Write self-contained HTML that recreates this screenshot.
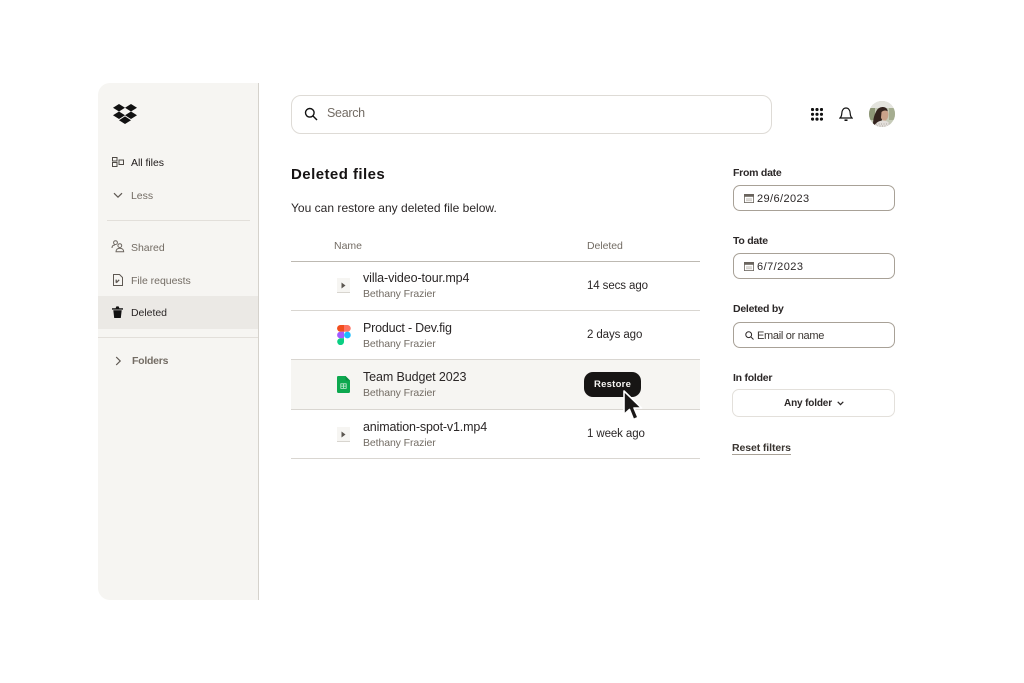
<!DOCTYPE html>
<html lang="en">
<head>
<meta charset="utf-8">
<title>Deleted files</title>
<style>
html,body{margin:0;padding:0;background:#fff}
body{width:1024px;height:683px;position:relative;overflow:hidden;font-family:"Liberation Sans",sans-serif;color:#1e1919}
.a{position:absolute}
.t{position:absolute;white-space:nowrap;line-height:20px}
svg{position:absolute;display:block}
.g{color:#736c64}
.side{font-size:10.5px;letter-spacing:-.03px}
.name{font-size:12.5px;letter-spacing:-.1px;color:#2b2727}
.by{font-size:10.5px;letter-spacing:-.1px;color:#736c64}
.when{font-size:11.5px;letter-spacing:-.1px;color:#2b2727}
.lab{font-size:10.5px;font-weight:700;letter-spacing:-.25px;color:#2b2727}
.inp{position:absolute;left:733px;width:160px;height:24px;border:1px solid #a8a197;border-radius:7px;background:#fff}
.line{position:absolute;left:291px;width:409px;height:1px;background:#d9d6d1}
</style>
</head>
<body>
<!-- Sidebar -->
<div class="a" style="left:98px;top:83px;width:160px;height:517px;background:#f6f5f2;border-radius:12px 0 0 12px"></div>
<div class="a" style="left:258px;top:83px;width:1px;height:517px;background:#d5d2cc"></div>
<div class="a" style="left:98px;top:296px;width:160px;height:33px;background:#ebe9e5"></div>
<div class="a" style="left:107px;top:220px;width:143px;height:1px;background:#e2dfda"></div>
<div class="a" style="left:98px;top:337px;width:160px;height:1px;background:#e2dfda"></div>

<svg style="left:113px;top:104px" width="24" height="20" viewBox="0 0 24 20" fill="#111">
<path d="M6 0l6 3.700L6 7.500 0 3.700zM18 0l6 3.700-6 3.800-6-3.800zM0 11.200L6 7.500l6 3.700L6 15zM18 7.500l6 3.700L18 15l-6-3.800zM6 16.200l6-3.800 6 3.800-6 3.800z"/>
</svg>

<svg style="left:112px;top:157px" width="12" height="10" viewBox="0 0 12 10" fill="none" stroke="#4f4a45" stroke-width="1">
<rect x=".5" y=".5" width="4.500" height="3.500"/><rect x=".5" y="5.500" width="4.500" height="4"/><rect x="7" y="3" width="4.500" height="4.500"/>
</svg>
<div class="t side" style="left:131px;top:153px;color:#1e1919">All files</div>

<svg style="left:113px;top:192px" width="10" height="7" viewBox="0 0 10 7" fill="none" stroke="#5e5852" stroke-width="1.200"><path d="M1 1.200l4 4 4-4"/></svg>
<div class="t side g" style="left:131px;top:186px">Less</div>

<svg style="left:111px;top:240px" width="14" height="13" viewBox="0 0 14 13" fill="none" stroke="#6b655e" stroke-width="1">
<circle cx="4.500" cy="2.600" r="1.900"/><path d="M1 8c0-2 1.300-3 3-3"/><circle cx="8.800" cy="5.600" r="1.900"/><path d="M5 11.800c0-2.300 1.600-3.600 3.800-3.600s3.900 1.300 3.900 3.600z"/>
</svg>
<div class="t side g" style="left:131px;top:238px">Shared</div>

<svg style="left:113px;top:274px" width="10" height="12" viewBox="0 0 10 12" fill="none" stroke="#5e5852" stroke-width="1">
<path d="M.5.500h6l3 3v8h-9z"/><path d="M3.200 5.600v3.200M3.200 8.800l3-3" stroke-width="1.300"/>
</svg>
<div class="t side g" style="left:131px;top:271px">File requests</div>

<svg style="left:112px;top:306px" width="11" height="12" viewBox="0 0 11 12" fill="#111">
<path d="M0 2.200h11v1.400H0zM3.600 2.200L4.400.4h2.200l.8 1.800zM1.300 4.200h8.400L8.800 12H2.200z"/>
</svg>
<div class="t side" style="left:131px;top:303px;color:#2b2727">Deleted</div>

<svg style="left:115px;top:356px" width="7" height="10" viewBox="0 0 7 10" fill="none" stroke="#5e5852" stroke-width="1.200"><path d="M1.200 1l4 4-4 4"/></svg>
<div class="t" style="left:132px;top:351px;color:#736c64;font-weight:700;font-size:10.5px;letter-spacing:-.25px">Folders</div>

<!-- Search -->
<div class="a" style="left:291px;top:95px;width:479px;height:37px;border:1px solid #dedbd6;border-radius:10px;background:#fff"></div>
<svg style="left:304px;top:107px" width="14" height="14" viewBox="0 0 14 14" fill="none" stroke="#111" stroke-width="1.400"><circle cx="5.800" cy="5.800" r="4.300"/><path d="M9 9l4 4"/></svg>
<div class="t g" style="left:327px;top:103px;font-size:12.5px;letter-spacing:-.3px">Search</div>

<!-- Top icons -->
<svg style="left:811px;top:108px" width="12" height="13" viewBox="0 0 12 13" fill="#111">
<circle cx="1.500" cy="1.500" r="1.600"/><circle cx="6" cy="1.500" r="1.600"/><circle cx="10.500" cy="1.500" r="1.600"/>
<circle cx="1.500" cy="6.300" r="1.600"/><circle cx="6" cy="6.300" r="1.600"/><circle cx="10.500" cy="6.300" r="1.600"/>
<circle cx="1.500" cy="11.100" r="1.600"/><circle cx="6" cy="11.100" r="1.600"/><circle cx="10.500" cy="11.100" r="1.600"/>
</svg>
<svg style="left:839px;top:107px" width="14" height="15" viewBox="0 0 14 15" fill="none" stroke="#111" stroke-width="1.200">
<path d="M1 11c1.400-1.300 1.700-2.500 1.800-4.600C3 3 4.700 1 7 1s4 2 4.200 5.400c.1 2.100.4 3.300 1.800 4.600z"/><path d="M5.500 13.200h3" stroke-width="1.600"/>
</svg>
<svg style="left:869px;top:101px" width="26" height="26" viewBox="0 0 26 26">
<defs><clipPath id="c"><circle cx="13" cy="13" r="13"/></clipPath></defs>
<g clip-path="url(#c)">
<rect width="26" height="26" fill="#c6cbb8"/>
<rect width="26" height="7" fill="#e4e4de"/>
<rect x="0" y="7" width="6" height="12" fill="#8d9676"/>
<rect x="20" y="7" width="6" height="12" fill="#a5ad90"/>
<path d="M4 24c0-6 1.500-11 4-15 2.500-3.500 8-4 10-1 1 2 1 3-1 3-3 3-4 9-6 13z" fill="#33231e"/>
<path d="M12.500 11c2-2 5.500-2 6.500 0 1 3 0 7-2.500 8.500-2 1-4-1-4.500-3z" fill="#c9a28a"/>
<path d="M5 26c1-4 5-6.500 9-6.500s7 2 8 6.500z" fill="#e3dfdb"/>
<path d="M7 23h14M8 25h12" stroke="#9d958e" stroke-width=".8" stroke-dasharray="1 1.500"/>
</g>
</svg>

<!-- Heading -->
<div class="t" style="left:291px;top:165px;font-size:15px;font-weight:700;letter-spacing:.45px;color:#161313">Deleted files</div>
<div class="t" style="left:291px;top:198px;font-size:12px;letter-spacing:.02px;color:#2b2727">You can restore any deleted file below.</div>

<!-- Table -->
<div class="t g" style="left:334px;top:236px;font-size:10.5px;letter-spacing:0">Name</div>
<div class="t g" style="left:587px;top:236px;font-size:10.5px;letter-spacing:-.05px">Deleted</div>
<div class="a" style="left:291px;top:261px;width:409px;height:1px;background:#bdb9b2"></div>
<div class="a" style="left:291px;top:360px;width:409px;height:49px;background:#f6f5f2"></div>
<div class="line" style="top:310px"></div>
<div class="line" style="top:359px"></div>
<div class="line" style="top:409px"></div>
<div class="line" style="top:458px"></div>

<!-- Row 1 -->
<svg style="left:337px;top:278px" width="13" height="15" viewBox="0 0 13 15">
<rect width="13" height="15" fill="#f6f5f2"/><rect y="14" width="13" height="1" fill="#d8d5cf"/><path d="M4.500 4.500l4 3-4 3z" fill="#5b5650"/>
</svg>
<div class="t name" style="left:363px;top:268px">villa-video-tour.mp4</div>
<div class="t by" style="left:363px;top:284px">Bethany Frazier</div>
<div class="t when" style="left:587px;top:276px">14 secs ago</div>

<!-- Row 2 -->
<svg style="left:337px;top:325px" width="14" height="20" viewBox="0 0 14 20">
<path d="M3.400 0H7V6.700H3.400a3.350 3.350 0 010-6.700z" fill="#f24e1e"/>
<path d="M7 0h3.400a3.350 3.350 0 010 6.700H7z" fill="#ff7262"/>
<path d="M3.400 6.700H7v6.600H3.400a3.300 3.300 0 010-6.600z" fill="#a259ff"/>
<circle cx="10.400" cy="10" r="3.350" fill="#1abcfe"/>
<path d="M3.400 13.300H7V16.600a3.400 3.400 0 11-3.600-3.300z" fill="#0acf83"/>
</svg>
<div class="t name" style="left:363px;top:318px;letter-spacing:-.2px">Product - Dev.fig</div>
<div class="t by" style="left:363px;top:334px">Bethany Frazier</div>
<div class="t when" style="left:587px;top:325px">2 days ago</div>

<!-- Row 3 -->
<svg style="left:337px;top:376px" width="13" height="17" viewBox="0 0 13 17">
<path d="M1.200 0H8.500L13 4.500V15.800a1.200 1.200 0 01-1.200 1.200H1.200A1.200 1.200 0 010 15.800V1.200A1.200 1.200 0 011.200 0z" fill="#0da84f"/>
<path d="M8.500 0L13 4.500H9.500a1 1 0 01-1-1z" fill="#0b8f43"/>
<path d="M3.800 7.800h5.400v4.600H3.800zM6.500 7.800v4.600M3.800 10.100h5.400" fill="none" stroke="#c8ecd5" stroke-width=".8"/>
</svg>
<div class="t name" style="left:363px;top:367px">Team Budget 2023</div>
<div class="t by" style="left:363px;top:383px">Bethany Frazier</div>
<div class="a" style="left:584px;top:372px;width:57px;height:25px;background:#171514;border-radius:9px"></div>
<div class="t" style="left:594px;top:375px;font-size:9.5px;font-weight:700;letter-spacing:.25px;color:#f6f5f2">Restore</div>
<svg style="left:620px;top:389px" width="24" height="34" viewBox="0 0 24 34">
<path d="M4 2V25.500L9.500 20.500 13.500 30.500 18 28.500 14 19H21.500z" fill="#1a1817" stroke="#fff" stroke-width="1.600" stroke-linejoin="round"/>
</svg>

<!-- Row 4 -->
<svg style="left:337px;top:427px" width="13" height="15" viewBox="0 0 13 15">
<rect width="13" height="15" fill="#f6f5f2"/><rect y="14" width="13" height="1" fill="#d8d5cf"/><path d="M4.500 4.500l4 3-4 3z" fill="#5b5650"/>
</svg>
<div class="t name" style="left:363px;top:417px;letter-spacing:-.15px">animation-spot-v1.mp4</div>
<div class="t by" style="left:363px;top:433px">Bethany Frazier</div>
<div class="t when" style="left:587px;top:424px">1 week ago</div>

<!-- Filters -->
<div class="t lab" style="left:733px;top:163px">From date</div>
<div class="inp" style="top:185px"></div>
<svg style="left:744px;top:194px" width="10" height="9" viewBox="0 0 10 9"><rect x=".4" y=".4" width="9.200" height="8.200" fill="#fff" stroke="#6b655e" stroke-width=".8"/><rect x=".4" y=".4" width="9.200" height="2.400" fill="#6b655e"/><path d="M2 5h6M2 6.800h6" stroke="#a8a197" stroke-width=".7"/></svg>
<div class="t" style="left:757px;top:189px;font-size:11px;letter-spacing:.4px;color:#2b2727">29/6/2023</div>

<div class="t lab" style="left:733px;top:231px">To date</div>
<div class="inp" style="top:253px"></div>
<svg style="left:744px;top:262px" width="10" height="9" viewBox="0 0 10 9"><rect x=".4" y=".4" width="9.200" height="8.200" fill="#fff" stroke="#6b655e" stroke-width=".8"/><rect x=".4" y=".4" width="9.200" height="2.400" fill="#6b655e"/><path d="M2 5h6M2 6.800h6" stroke="#a8a197" stroke-width=".7"/></svg>
<div class="t" style="left:757px;top:257px;font-size:11px;letter-spacing:.45px;color:#2b2727">6/7/2023</div>

<div class="t lab" style="left:733px;top:299px">Deleted by</div>
<div class="inp" style="top:322px"></div>
<svg style="left:745px;top:331px" width="9" height="9" viewBox="0 0 9 9" fill="none" stroke="#2b2727" stroke-width="1"><circle cx="3.700" cy="3.700" r="2.900"/><path d="M5.800 5.800l2.700 2.700"/></svg>
<div class="t" style="left:757px;top:326px;font-size:11px;letter-spacing:-.3px;color:#3a3531">Email or name</div>

<div class="t lab" style="left:733px;top:368px">In folder</div>
<div class="a" style="left:732px;top:389px;width:161px;height:26px;border:1px solid #e3e0db;border-radius:7px;background:#fff"></div>
<div class="t" style="left:784px;top:394px;font-size:10px;font-weight:700;letter-spacing:-.15px;color:#2b2727">Any folder</div>
<svg style="left:837px;top:401px" width="7" height="5" viewBox="0 0 7 5" fill="none" stroke="#2b2727" stroke-width="1.200"><path d="M.7.800l2.800 2.800L6.300.8"/></svg>

<div class="t" style="left:732px;top:438px;font-size:10.5px;font-weight:700;letter-spacing:-.1px;color:#3a3531">Reset filters</div>
<div class="a" style="left:732px;top:454px;width:59px;height:1px;background:#a8a197"></div>
</body>
</html>
